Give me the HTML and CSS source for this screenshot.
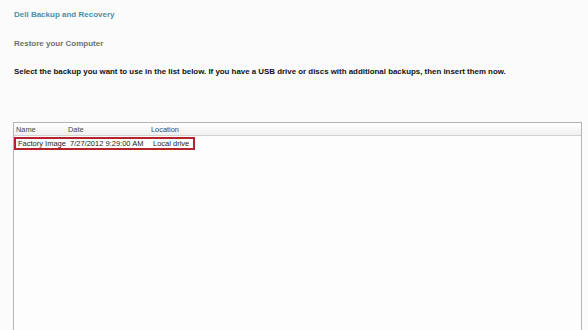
FILE: index.html
```html
<!DOCTYPE html>
<html>
<head>
<meta charset="utf-8">
<link rel="stylesheet" href="styles.css">
</head>
<body>
<div class="page">
  <div class="title">Dell Backup and Recovery</div>
  <div class="subtitle">Restore your Computer</div>
  <div class="instr">Select the backup you want to use in the list below. If you have a USB drive or discs with additional backups, then insert them now.</div>
  <div class="list">
    <div class="head">
      <span class="c1">Name</span><span class="c2">Date</span><span class="c3">Location</span>
    </div>
    <div class="row sel">
      <span class="c1">Factory Image</span><span class="c2">7/27/2012 9:29:00 AM</span><span class="c3">Local drive</span>
    </div>
  </div>
</div>
</body>
</html>
```
FILE: styles.css
```css
html, body { margin: 0; padding: 0; background: #fbfbfb; }
body { width: 588px; height: 330px; overflow: hidden; font-family: "Liberation Sans", Arial, sans-serif; }
.page { display: flex; flex-direction: column; padding: 10px 0 0 14px; height: 320px; box-sizing: content-box; }
.title { font-weight: bold; font-size: 8px; color: #4a8fa9; line-height: 10px; }
.subtitle { font-weight: bold; font-size: 8px; color: #707070; line-height: 10px; margin-top: 19px; }
.instr { font-weight: bold; font-size: 7.9px; color: #111; line-height: 10px; margin-top: 18px; white-space: nowrap; }
.list { margin-top: 45px; margin-left: -1px; width: 567px; flex: 1; border: 1px solid #b4b4b4; border-bottom: none; background: #fdfdfd; }
.head { display: flex; height: 12px; align-items: center; background: linear-gradient(#ffffff, #f0f0f0); border-bottom: 1px solid #d2d2d2; font-size: 7.4px; color: #4a4a4a; }
.row { display: flex; height: 13px; align-items: center; font-size: 7.5px; color: #1e1e1e; }
.c1 { width: 51px; padding-left: 2px; box-sizing: border-box; }
.c2 { width: 84px; padding-left: 3px; box-sizing: border-box; }
.c3 { padding-left: 2px; }
.sel { width: 181px; box-sizing: border-box; border: 2px solid #b3242e; margin-top: 1px; }
```
